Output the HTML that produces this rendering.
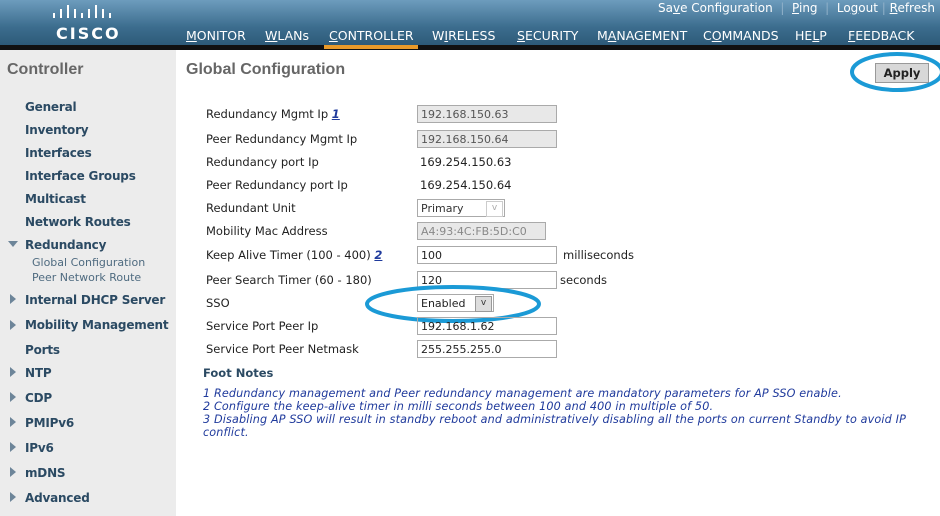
<html><head><style>
body{margin:0;width:940px;height:516px;overflow:hidden;font-family:"DejaVu Sans",Verdana,sans-serif;background:#fff;position:relative}
.hdr{position:absolute;left:0;top:0;width:940px;height:45px;background:linear-gradient(#6d9cbd,#3c6d8e 60%,#2d5a78)}
.blk{position:absolute;left:0;top:45px;width:940px;height:5px;background:#111}
.a{position:absolute;color:#fff;font-size:12.5px;white-space:nowrap}
.side{position:absolute;left:0;top:50px;width:176px;height:466px;background:#ececec}
.s{position:absolute;left:25px;font-size:12px;font-weight:bold;color:#2b4a63;white-space:nowrap;letter-spacing:-0.2px}
.ss{position:absolute;left:32px;font-size:11px;color:#4f6b80;white-space:nowrap}
.tri{position:absolute;left:10px;width:0;height:0;border-top:5px solid transparent;border-bottom:5px solid transparent;border-left:6px solid #6d8599}
.l{position:absolute;left:206px;font-size:11.5px;color:#222;white-space:nowrap}
.in{position:absolute;left:417px;width:140px;height:18px;border:1px solid #aaa;font-size:11px;line-height:17px;padding-left:3px;box-sizing:border-box;color:#222;font-family:"DejaVu Sans",sans-serif}
.g{background:#e8e8e8;color:#555}
.t{position:absolute;font-size:11.5px;color:#222}
.fn{position:absolute;left:203px;font-size:11.2px;font-style:italic;color:#1f3a9c;white-space:nowrap;letter-spacing:0.15px}
</style></head><body>
<div class="hdr"></div><div class="blk"></div>
<div style="position:absolute;left:324px;top:45px;width:94px;height:4px;background:#e89a2a"></div>
<svg style="position:absolute;left:52px;top:4px" width="70" height="16"><g fill="#fff"><rect x="1" y="9" width="2" height="5"/><rect x="8" y="5" width="2" height="9"/><rect x="15" y="1" width="2" height="13"/><rect x="22" y="5" width="2" height="9"/><rect x="29" y="9" width="2" height="5"/><rect x="36" y="5" width="2" height="9"/><rect x="43" y="1" width="2" height="13"/><rect x="50" y="5" width="2" height="9"/><rect x="57" y="9" width="2" height="5"/></g></svg>
<div class="a" style="left:56px;top:24px;font-weight:bold;font-size:16px;letter-spacing:2px">CISCO</div>
<div class="a" style="left:186px;top:28px"><u>M</u>ONITOR</div>
<div class="a" style="left:265px;top:28px"><u>W</u>LANs</div>
<div class="a" style="left:329px;top:28px"><u>C</u>ONTROLLER</div>
<div class="a" style="left:432px;top:28px">W<u>I</u>RELESS</div>
<div class="a" style="left:517px;top:28px"><u>S</u>ECURITY</div>
<div class="a" style="left:597px;top:28px">M<u>A</u>NAGEMENT</div>
<div class="a" style="left:703px;top:28px">C<u>O</u>MMANDS</div>
<div class="a" style="left:795px;top:28px">HE<u>L</u>P</div>
<div class="a" style="left:848px;top:28px"><u>F</u>EEDBACK</div>
<div class="a" style="left:658px;top:1px;font-size:12px">Sa<u>v</u>e Configuration&nbsp; <span style="color:#8fb0c8">|</span>&nbsp; <u>P</u>ing&nbsp; <span style="color:#8fb0c8">|</span>&nbsp; Lo<u>g</u>out <span style="color:#8fb0c8">|</span> <u>R</u>efresh</div>
<div class="side"></div>
<div style="position:absolute;left:7px;top:61px;font-family:'Liberation Sans',sans-serif;font-size:16px;font-weight:bold;color:#666">Controller</div>
<div style="position:absolute;left:186px;top:61px;font-family:'Liberation Sans',sans-serif;font-size:16px;font-weight:bold;color:#666">Global Configuration</div>
<div style="position:absolute;left:875px;top:63px;width:52px;height:18px;background:#d8d8d8;border:1px solid #999;font-size:11.5px;font-weight:bold;text-align:center;line-height:18px;color:#222">Apply</div>
<svg style="position:absolute;left:845px;top:50px" width="95" height="44"><ellipse cx="52" cy="22" rx="45" ry="18" fill="none" stroke="#1b9ad6" stroke-width="4"/></svg>
<div class="s" style="top:100px">General</div>
<div class="s" style="top:123px">Inventory</div>
<div class="s" style="top:146px">Interfaces</div>
<div class="s" style="top:169px">Interface Groups</div>
<div class="s" style="top:192px">Multicast</div>
<div class="s" style="top:215px">Network Routes</div>
<div style="position:absolute;left:8px;top:241px;border-left:5px solid transparent;border-right:5px solid transparent;border-top:6px solid #6d8599"></div>
<div class="s" style="top:238px">Redundancy</div>
<div class="ss" style="top:256px">Global Configuration</div>
<div class="ss" style="top:271px">Peer Network Route</div>
<div class="tri" style="top:294px"></div><div class="s" style="top:293px">Internal DHCP Server</div>
<div class="tri" style="top:320px"></div><div class="s" style="top:318px">Mobility Management</div>
<div class="s" style="top:343px">Ports</div>
<div class="tri" style="top:367px"></div><div class="s" style="top:366px">NTP</div>
<div class="tri" style="top:392px"></div><div class="s" style="top:391px">CDP</div>
<div class="tri" style="top:417px"></div><div class="s" style="top:416px">PMIPv6</div>
<div class="tri" style="top:442px"></div><div class="s" style="top:441px">IPv6</div>
<div class="tri" style="top:467px"></div><div class="s" style="top:466px">mDNS</div>
<div class="tri" style="top:492px"></div><div class="s" style="top:491px">Advanced</div>
<div class="l" style="top:107px">Redundancy Mgmt Ip <u style="color:#1f3a9c;font-style:italic;font-weight:bold">1</u></div>
<div class="in g" style="top:105px">192.168.150.63</div>
<div class="l" style="top:132px">Peer Redundancy Mgmt Ip</div>
<div class="in g" style="top:130px">192.168.150.64</div>
<div class="l" style="top:155px">Redundancy port Ip</div>
<div class="t" style="left:420px;top:155px">169.254.150.63</div>
<div class="l" style="top:178px">Peer Redundancy port Ip</div>
<div class="t" style="left:420px;top:178px">169.254.150.64</div>
<div class="l" style="top:201px">Redundant Unit</div>
<div class="in" style="top:199px;width:88px;color:#333">Primary<span style="position:absolute;right:1px;top:1px;width:15px;height:14px;border:1px solid #ccc;color:#aaa;font-size:9px;line-height:13px;text-align:center">v</span></div>
<div class="l" style="top:224px">Mobility Mac Address</div>
<div class="in g" style="top:222px;width:129px;color:#888">A4:93:4C:FB:5D:C0</div>
<div class="l" style="top:248px">Keep Alive Timer (100 - 400) <u style="color:#1f3a9c;font-style:italic;font-weight:bold">2</u></div>
<div class="in" style="top:246px">100</div><div class="t" style="left:563px;top:248px">milliseconds</div>
<div class="l" style="top:273px">Peer Search Timer (60 - 180)</div>
<div class="in" style="top:271px">120</div><div class="t" style="left:560px;top:273px">seconds</div>
<div class="l" style="top:296px">SSO</div>
<div class="in" style="top:294px;width:77px;color:#222">Enabled<span style="position:absolute;right:1px;top:1px;width:15px;height:14px;border:1px solid #999;background:#ddd;color:#333;font-size:9px;line-height:13px;text-align:center">v</span></div>
<svg style="position:absolute;left:363px;top:282px" width="182" height="44"><ellipse cx="90" cy="22" rx="86" ry="17" fill="none" stroke="#1b9ad6" stroke-width="4"/></svg>
<div class="l" style="top:319px">Service Port Peer Ip</div>
<div class="in" style="top:317px">192.168.1.62</div>
<div class="l" style="top:342px">Service Port Peer Netmask</div>
<div class="in" style="top:340px">255.255.255.0</div>
<div style="position:absolute;left:203px;top:366px;font-size:11.5px;font-weight:bold;color:#2b4a63">Foot Notes</div>
<div class="fn" style="top:387px">1 Redundancy management and Peer redundancy management are mandatory parameters for AP SSO enable.</div>
<div class="fn" style="top:400px">2 Configure the keep-alive timer in milli seconds between 100 and 400 in multiple of 50.</div>
<div class="fn" style="top:413px">3 Disabling AP SSO will result in standby reboot and administratively disabling all the ports on current Standby to avoid IP</div>
<div class="fn" style="top:426px">conflict.</div>
</body></html>
